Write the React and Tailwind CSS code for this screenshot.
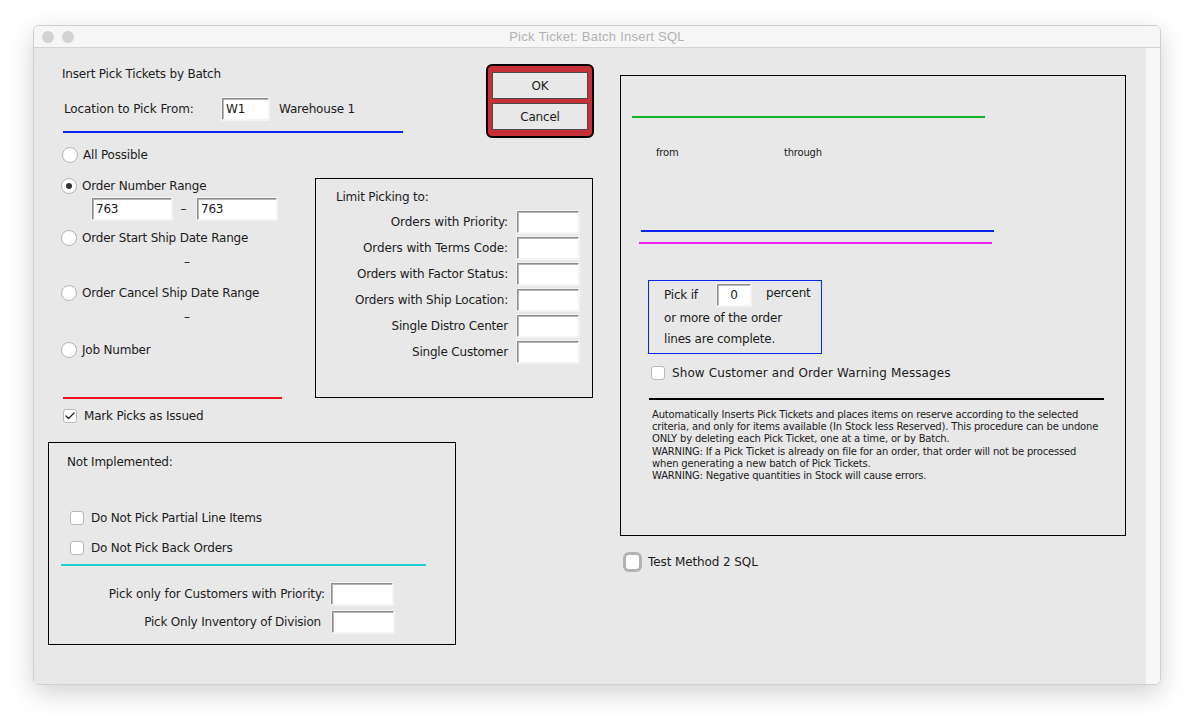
import { Check } from 'lucide-react';

function Field({ value = '', className = '', center }) {
  return (
    <input
      readOnly
      value={value}
      className={`h-[22px] bg-white border border-[#f4f4f4] border-t-[#8c8c8c] border-l-[#8c8c8c] shadow-[inset_1px_1px_0_#b5b5b5,0_0_0_1px_#f4f4f4] px-[3px] text-[12px] text-[#1a1a1a] outline-none ${center ? 'text-center' : ''} ${className}`}
    />
  );
}

function Radio({ label, checked, className = '' }) {
  return (
    <div className={`flex items-center h-[18px] ${className}`}>
      <span className="w-[16px] h-[16px] rounded-full bg-white border border-[#b4b4b4] flex items-center justify-center shrink-0">
        {checked && <span className="w-[6px] h-[6px] rounded-full bg-[#333333]" />}
      </span>
      <span className="ml-[5px]">{label}</span>
    </div>
  );
}

function CheckRow({ label, checked, className = '' }) {
  return (
    <div className={`flex items-center h-[18px] ${className}`}>
      <span className="w-[14px] h-[14px] rounded-[3px] bg-white border border-[#b8b8b8] flex items-center justify-center shrink-0">
        {checked && <Check size={12} strokeWidth={2.5} color="#222222" />}
      </span>
      <span className="ml-[7px]">{label}</span>
    </div>
  );
}

function LimitRow({ label, className = '' }) {
  return (
    <div className="flex items-center justify-end h-[26px]">
      <span className={`mr-[9px] ${className}`}>{label}</span>
      <Field className="w-[62px] h-[20px]" />
    </div>
  );
}

export default function App() {
  return (
    <div
      className="w-[1194px] h-[726px] bg-white pt-[25px] pl-[33px] overflow-hidden text-[12px] tracking-[-0.2px] text-[#1c1c1c]"
      style={{ fontFamily: '"DejaVu Sans", sans-serif' }}
    >
      <div className="w-[1128px] h-[660px] flex flex-col rounded-[6px] overflow-hidden border border-[#cfcfcf] shadow-[0_8px_26px_rgba(0,0,0,0.18)]">
        {/* title bar */}
        <div className="relative h-[22px] shrink-0 flex items-center justify-center bg-[#f6f6f6] border-b border-[#d4d4d4]">
          <div className="absolute left-[8px] top-[5px] flex gap-[8px]">
            <span className="w-[12px] h-[12px] rounded-full bg-[#d3d3d3]" />
            <span className="w-[12px] h-[12px] rounded-full bg-[#d3d3d3]" />
          </div>
          <span className="text-[13px] tracking-[0.25px] text-[#b2b2b2]" style={{ fontFamily: '"Liberation Sans", sans-serif' }}>Pick Ticket: Batch Insert SQL</span>
        </div>

        <div className="flex-1 flex min-h-0">
          <div className="w-[1112px] bg-[#e8e8e8] flex">
            {/* left side */}
            <div className="w-[586px] shrink-0">
              <div className="flex h-[99px]">
                <div className="w-[452px] shrink-0 pl-[28px]">
                  <div className="mt-[18px] h-[16px] leading-[16px]">Insert Pick Tickets by Batch</div>
                  <div className="mt-[16px] ml-[2px] flex items-center h-[22px]">
                    <span className="w-[158px] tracking-[-0.1px]">Location to Pick From:</span>
                    <Field value="W1" className="w-[47px]" />
                    <span className="ml-[10px]">Warehouse 1</span>
                  </div>
                  <div className="mt-[11px] ml-[1px] w-[340px] h-[2px] bg-[#0a24f0]" />
                </div>
                <div className="mt-[16px] w-[108px] h-[74px] shrink-0 flex flex-col gap-[4px] justify-center px-[4px] bg-[#c52f35] border-[2px] border-black rounded-[6px]">
                  <div className="h-[27px] flex items-center justify-center bg-[#e8e8e8] border border-[#4a4a4a]">OK</div>
                  <div className="h-[27px] flex items-center justify-center bg-[#e8e8e8] border border-[#4a4a4a]">Cancel</div>
                </div>
              </div>

              <div className="flex">
                <div className="w-[281px] shrink-0 pl-[27px]">
                  <Radio label="All Possible" className="mt-[-1px] ml-[1px]" />
                  <Radio label="Order Number Range" checked className="mt-[13px]" />
                  <div className="mt-[3px] ml-[31px] flex items-center">
                    <Field value="763" className="w-[80px] h-[20px]" />
                    <span className="w-[25px] text-center pr-[2px]">–</span>
                    <Field value="763" className="w-[80px] h-[20px]" />
                  </div>
                  <Radio label="Order Start Ship Date Range" className="mt-[9px]" />
                  <div className="h-[37px] pl-[123px] pt-[8px] leading-[14px]">–</div>
                  <Radio label="Order Cancel Ship Date Range" />
                  <div className="h-[39px] pl-[123px] pt-[8px] leading-[14px]">–</div>
                  <Radio label="Job Number" />
                  <div className="mt-[38px] ml-[2px] w-[219px] h-[2px] bg-[#ee1020]" />
                  <CheckRow label="Mark Picks as Issued" checked className="mt-[8px] ml-[2px]" />
                </div>
                <div className="mt-[31px] w-[278px] h-[220px] shrink-0 border border-black pl-[20px] pr-[13px] pt-[10px]">
                  <div className="h-[16px] leading-[16px] mb-[4px]">Limit Picking to:</div>
                  <LimitRow label="Orders with Priority:" className="tracking-[-0.1px]" />
                  <LimitRow label="Orders with Terms Code:" className="tracking-[-0.1px]" />
                  <LimitRow label="Orders with Factor Status:" />
                  <LimitRow label="Orders with Ship Location:" />
                  <LimitRow label="Single Distro Center" />
                  <LimitRow label="Single Customer" />
                </div>
              </div>

              <div className="mt-[17px] ml-[14px] w-[408px] h-[203px] border border-black">
                <div className="ml-[18px] mt-[11px] h-[16px] leading-[16px]">Not Implemented:</div>
                <CheckRow label="Do Not Pick Partial Line Items" className="mt-[39px] ml-[21px]" />
                <CheckRow label="Do Not Pick Back Orders" className="mt-[12px] ml-[21px]" />
                <div className="mt-[7px] ml-[12px] w-[365px] h-[2px] bg-[#1fd0d0]" />
                <div className="mt-[17px] w-[344px] flex items-center justify-end h-[22px]">
                  <span className="mr-[6px] tracking-[-0.12px]">Pick only for Customers with Priority:</span>
                  <Field className="w-[62px] h-[20px]" />
                </div>
                <div className="mt-[6px] w-[345px] flex items-center justify-end h-[22px]">
                  <span className="mr-[11px]">Pick Only Inventory of Division</span>
                  <Field className="w-[62px] h-[20px]" />
                </div>
              </div>
            </div>

            {/* right side */}
            <div className="w-[506px] shrink-0 pt-[27px]">
              <div className="h-[461px] border border-black">
                <div className="mt-[40px] ml-[11px] w-[353px] h-[2px] bg-[#12b024]" />
                <div className="mt-[28px] ml-[35px] flex h-[12px] items-center text-[10px]">
                  <span className="w-[128px]">from</span>
                  <span>through</span>
                </div>
                <div className="mt-[72px] ml-[20px] w-[353px] h-[2px] bg-[#0a24f0]" />
                <div className="mt-[10px] ml-[18px] w-[353px] h-[2px] bg-[#ee22ee]" />
                <div className="mt-[36px] ml-[27px] w-[174px] h-[74px] border border-[#0a24f0] pl-[15px] pt-[4px]">
                  <div className="flex items-center h-[20px]">
                    <span className="w-[53px]">Pick if</span>
                    <Field value="0" center className="w-[34px] h-[20px]" />
                    <span className="ml-[15px] -mt-[5px]">percent</span>
                  </div>
                  <div className="mt-[3px] h-[21px] leading-[21px]">or more of the order</div>
                  <div className="h-[21px] leading-[21px]">lines are complete.</div>
                </div>
                <CheckRow label={<span className="tracking-[0.1px]">Show Customer and Order Warning Messages</span>} className="mt-[10px] ml-[30px]" />
                <div className="mt-[16px] ml-[28px] w-[455px] h-[2px] bg-black" />
                <div className="mt-[9px] ml-[31px] w-[452px] text-[10px] leading-[12.2px] tracking-[-0.18px]">
                  Automatically Inserts Pick Tickets and places items on reserve according to the selected criteria, and only for items available (In Stock less Reserved). This procedure can be undone ONLY by deleting each Pick Ticket, one at a time, or by Batch.
                  <br />
                  WARNING: If a Pick Ticket is already on file for an order, that order will not be processed when generating a new batch of Pick Tickets.
                  <br />
                  WARNING: Negative quantities in Stock will cause errors.
                </div>
              </div>
              <div className="mt-[17px] ml-[6px] flex items-center h-[18px]">
                <span className="w-[13px] h-[14px] rounded-[3px] bg-white shadow-[0_0_0_3px_#b2b2b2] shrink-0" />
                <span className="ml-[9px] tracking-[-0.1px]">Test Method 2 SQL</span>
              </div>
            </div>
          </div>
          <div className="flex-1 bg-[#f7f7f7]" />
        </div>
      </div>
    </div>
  );
}
